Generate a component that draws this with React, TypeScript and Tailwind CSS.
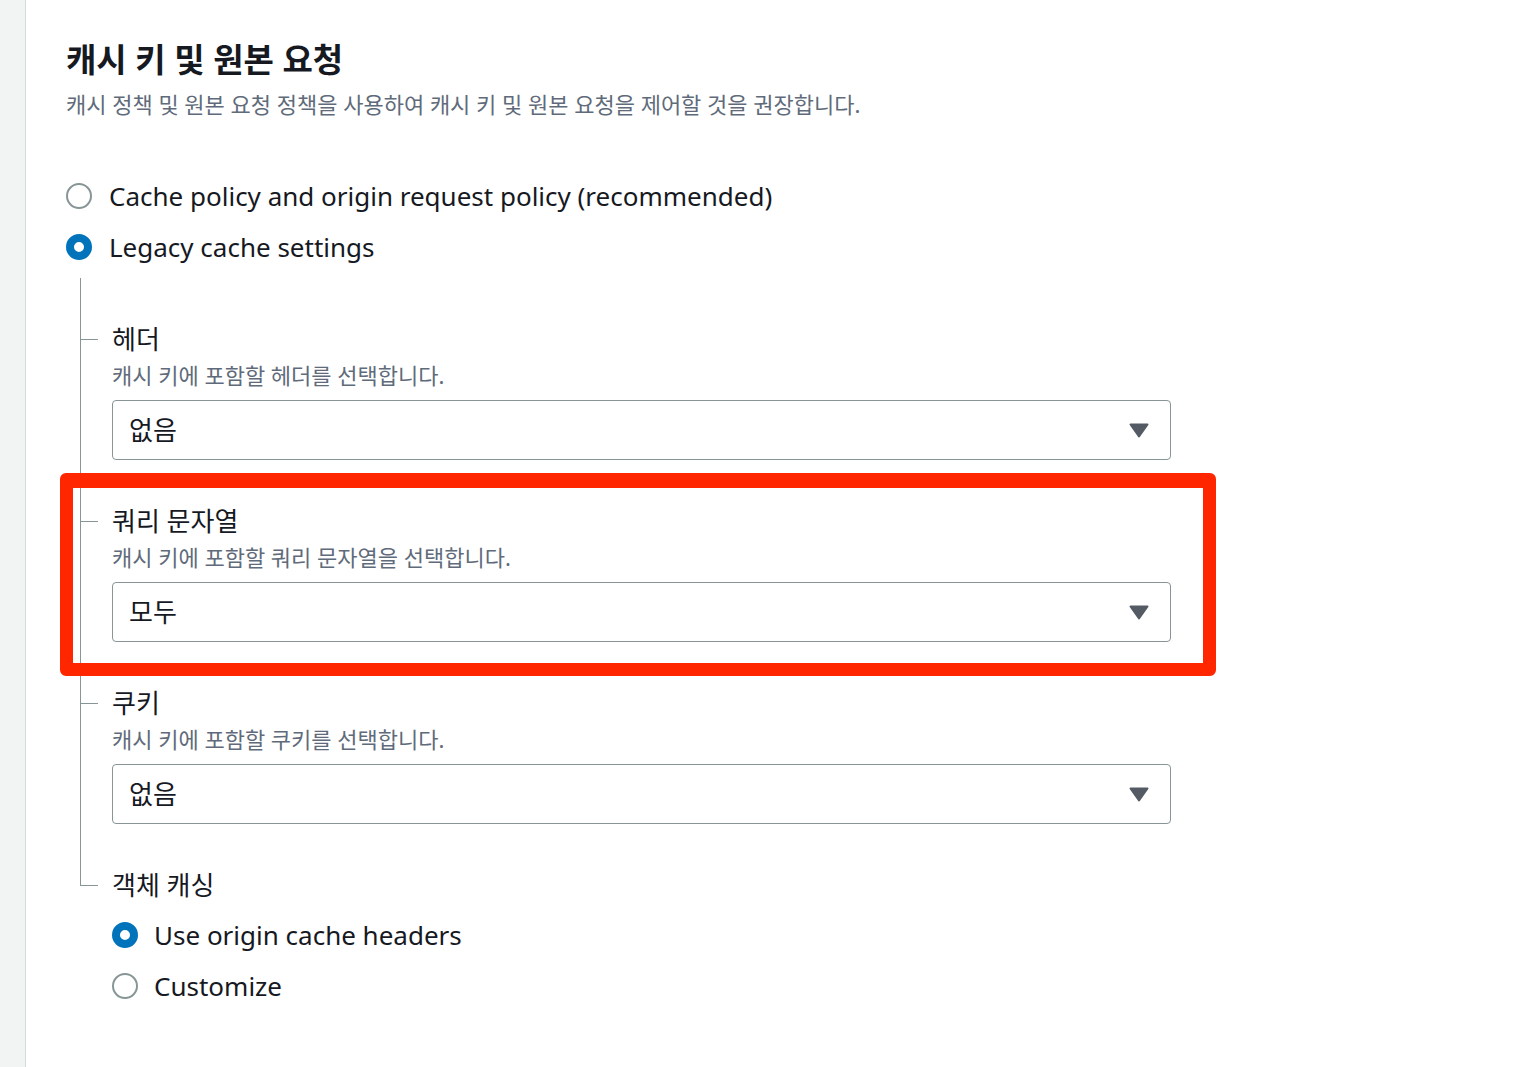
import type { ReactNode } from "react";

const FONT = "font-['Noto_Sans','Noto_Sans_CJK_KR',sans-serif]";

function Radio({ checked, label, gap }: { checked?: boolean; label: string; gap: string }) {
  return (
    <div className={`flex h-[51px] items-center ${gap}`}>
      {checked ? (
        <span className="box-border size-[26px] shrink-0 rounded-full border-[8px] border-[#0073bb] bg-white" />
      ) : (
        <span className="box-border size-[26px] shrink-0 rounded-full border-2 border-[#879596] bg-white" />
      )}
      <span className="text-[26px] leading-[36px] text-[#16191f]">{label}</span>
    </div>
  );
}

function Select({ value }: { value: string }) {
  return (
    <div className="mt-[10px] flex h-[60px] w-[1059px] items-center justify-between rounded-[4px] border border-[#879596] bg-white pl-[16px] pr-[21px]">
      <span className="text-[26px] leading-[34px] text-[#16191f]">{value}</span>
      <svg width="20" height="15" viewBox="0 0 20 15" aria-hidden="true">
        <path d="M1.5 1.5 H18.5 L10 13.5 Z" fill="#545b64" stroke="#545b64" strokeWidth="2" strokeLinejoin="round" />
      </svg>
    </div>
  );
}

function TreeItem({ label, last, children }: { label: string; last?: boolean; children: ReactNode }) {
  return (
    <div className="flex">
      {last ? (
        <div className="w-[32px] shrink-0">
          <div className="h-[18px] w-[18px] border-b border-l border-[#879596]" />
        </div>
      ) : (
        <div className="w-[32px] shrink-0 border-l border-[#879596]">
          <div className="flex h-[34px] items-center">
            <div className="h-px w-[17px] bg-[#879596]" />
          </div>
        </div>
      )}
      <div className={last ? "" : "pb-[44px]"}>
        <div className="h-[34px] text-[26px] leading-[34px] text-[#16191f]">{label}</div>
        {children}
      </div>
    </div>
  );
}

function Field({ label, desc, value }: { label: string; desc: string; value: string }) {
  return (
    <TreeItem label={label}>
      <p className="mt-[4px] text-[22px] leading-[30px] text-[#5f6b7a]">{desc}</p>
      <Select value={value} />
    </TreeItem>
  );
}

export default function App() {
  return (
    <div className={`relative flex min-h-[1067px] bg-white ${FONT}`}>
      <div className="w-[26px] shrink-0 border-r border-[#d5dbdb] bg-[#f2f3f3]" />
      <div className="pl-[40px] pt-[40px]">
        <h2 className="text-[33px] font-bold leading-[40px] text-[#16191f]">캐시 키 및 원본 요청</h2>
        <p className="mt-[10px] text-[22px] leading-[28px] text-[#5f6b7a]">
          캐시 정책 및 원본 요청 정책을 사용하여 캐시 키 및 원본 요청을 제어할 것을 권장합니다.
        </p>
        <div className="mt-[52px]">
          <Radio label="Cache policy and origin request policy (recommended)" gap="gap-[17px]" />
          <Radio checked label="Legacy cache settings" gap="gap-[17px]" />
        </div>
        <div className="ml-[14px] mt-[6px]">
          <div className="h-[44px] border-l border-[#879596]" />
          <Field label="헤더" desc="캐시 키에 포함할 헤더를 선택합니다." value="없음" />
          <Field label="쿼리 문자열" desc="캐시 키에 포함할 쿼리 문자열을 선택합니다." value="모두" />
          <Field label="쿠키" desc="캐시 키에 포함할 쿠키를 선택합니다." value="없음" />
          <TreeItem label="객체 캐싱" last>
            <div className="mt-[7px]">
              <Radio checked label="Use origin cache headers" gap="gap-[16px]" />
              <Radio label="Customize" gap="gap-[16px]" />
            </div>
          </TreeItem>
        </div>
      </div>
      <div className="pointer-events-none absolute left-[60px] top-[473px] h-[203px] w-[1156px] rounded-[6px] border-[13px] border-t-[15px] border-[#ff2600]" />
    </div>
  );
}
